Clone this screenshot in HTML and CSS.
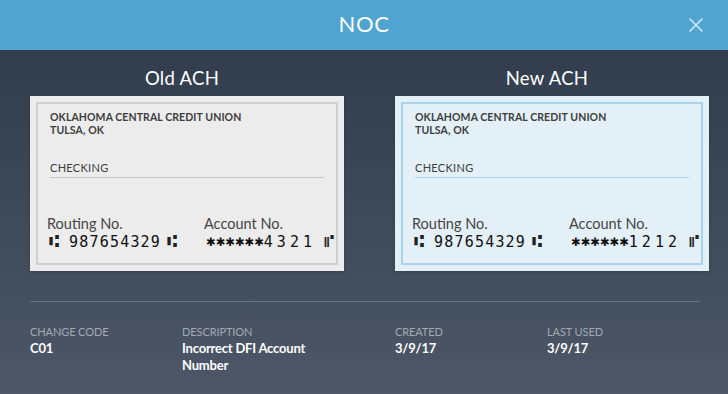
FILE: index.html
```html
<!DOCTYPE html>
<html lang="en">
<head>
  <meta charset="UTF-8" />
  <title>NOC</title>
  <link rel="stylesheet" href="styles.css">
</head>
<body>
  <header class="modal-header">
    <h1>NOC</h1>
    <button class="close" aria-label="Close">
      <svg width="16" height="16" viewBox="0 0 16 16"><path d="M1.5 1.5 L14.5 14.5 M14.5 1.5 L1.5 14.5" stroke="#cfe7f5" stroke-width="1.6" fill="none"/></svg>
    </button>
  </header>
  <main>
    <section class="compare">
      <div class="ach">
        <h2>Old ACH</h2>
        <div class="check">
          <div class="check-inner">
            <div class="bank">OKLAHOMA CENTRAL CREDIT UNION<br>TULSA, OK</div>
            <div class="acct-type">CHECKING</div>
            <div class="numbers">
              <div class="num routing">
                <span class="num-label">Routing No.</span>
                <span class="micr"><span class="sym">⑆</span>987654329<span class="sym after">⑆</span></span>
              </div>
              <div class="num">
                <span class="num-label">Account No.</span>
                <span class="micr"><span class="stars">✱✱✱✱✱✱</span><span class="acct-digits">4321</span><span class="sym onus">⑈</span></span>
              </div>
            </div>
          </div>
        </div>
      </div>
      <div class="ach new">
        <h2>New ACH</h2>
        <div class="check">
          <div class="check-inner">
            <div class="bank">OKLAHOMA CENTRAL CREDIT UNION<br>TULSA, OK</div>
            <div class="acct-type">CHECKING</div>
            <div class="numbers">
              <div class="num routing">
                <span class="num-label">Routing No.</span>
                <span class="micr"><span class="sym">⑆</span>987654329<span class="sym after">⑆</span></span>
              </div>
              <div class="num">
                <span class="num-label">Account No.</span>
                <span class="micr"><span class="stars">✱✱✱✱✱✱</span><span class="acct-digits">1212</span><span class="sym onus">⑈</span></span>
              </div>
            </div>
          </div>
        </div>
      </div>
    </section>
    <hr class="divider">
    <section class="meta">
      <div>
        <div class="meta-label">CHANGE CODE</div>
        <div class="meta-value">C01</div>
      </div>
      <div>
        <div class="meta-label">DESCRIPTION</div>
        <div class="meta-value">Incorrect DFI Account<br>Number</div>
      </div>
      <div>
        <div class="meta-label">CREATED</div>
        <div class="meta-value">3/9/17</div>
      </div>
      <div>
        <div class="meta-label">LAST USED</div>
        <div class="meta-value">3/9/17</div>
      </div>
    </section>
  </main>
</body>
</html>
```

FILE: styles.css
```css
html, body {
  margin: 0;
  height: 394px;
  overflow: hidden;
}
body {
  background: linear-gradient(#2e394a 0%, #3b4657 45%, #4d5767 100%);
  font-family: Lato, "Open Sans", Arial, sans-serif;
  color: #fff;
}
.modal-header {
  height: 50px;
  background: #50a4d0;
  display: flex;
  align-items: center;
  justify-content: center;
  position: relative;
}
.modal-header h1 {
  margin: 0;
  font-size: 22px;
  font-weight: 400;
  letter-spacing: 0.6px;
  margin-top: -4px;
}
.close {
  position: absolute;
  right: 24px;
  top: 17px;
  background: none;
  border: none;
  padding: 0;
  width: 16px;
  height: 16px;
}
.close svg {
  display: block;
}
.compare {
  display: flex;
  gap: 51px;
  padding-left: 30px;
}
.ach {
  width: 314px;
}
.ach h2 {
  margin: 0 0 0 -10px;
  padding-top: 18px;
  height: 28px;
  line-height: 20px;
  text-align: center;
  font-size: 18.5px;
  font-weight: 400;
  letter-spacing: 0.3px;
}
.check {
  background: #ececec;
  padding: 6px;
  height: 163px;
  box-shadow: 0 1px 3px rgba(0,0,0,0.2);
}
.check-inner {
  border: 2px solid #cfcfcf;
  padding: 7px 12px 0;
  box-sizing: border-box;
  height: 163px;
  color: #3d3d3d;
}
.new .check {
  background: #e4f0f8;
}
.new .check-inner {
  border-color: #a8d4e9;
}
.bank {
  font-size: 10.5px;
  font-weight: 700;
  line-height: 13px;
  letter-spacing: 0.1px;
}
.acct-type {
  margin-top: 25px;
  font-size: 11px;
  line-height: 12px;
  padding-bottom: 3px;
  border-bottom: 1px solid #c6c6c6;
  letter-spacing: 0.3px;
}
.new .acct-type {
  border-bottom-color: #a8d4e9;
}
.numbers {
  display: flex;
  margin-top: 38px;
  margin-left: -3px;
}
.num {
  display: flex;
  flex-direction: column;
  flex-shrink: 0;
}
.routing {
  width: 157px;
}
.num-label {
  font-size: 14.5px;
  line-height: 15px;
  color: #444;
}
.micr {
  font-family: "DejaVu Sans Mono", "Liberation Mono", monospace;
  font-size: 15px;
  line-height: 18px;
  margin-top: 2px;
  color: #111;
  letter-spacing: 1.2px;
  white-space: nowrap;
  margin-left: 2px;
}
.sym {
  font-size: 17px;
  line-height: 0;
  letter-spacing: 0;
  margin-right: 10px;
  color: #222;
}
.sym.after {
  margin-left: 6px;
  margin-right: 0;
}
.sym.onus {
  margin-left: 8px;
  margin-right: 0;
}
.stars {
  font-family: "DejaVu Sans", sans-serif;
  font-size: 11.5px;
  letter-spacing: 0;
  vertical-align: 1px;
}
.acct-digits {
  letter-spacing: 4px;
}
.divider {
  margin: 30px 28px 0 30px;
  border: none;
  border-top: 1px solid #667181;
}
.meta {
  display: grid;
  grid-template-columns: 152px 213px 152px auto;
  padding: 23px 0 0 30px;
}
.meta-label {
  font-size: 11px;
  line-height: 13px;
  color: #a2aab5;
  letter-spacing: -0.1px;
}
.meta-value {
  margin-top: 2px;
  font-size: 13px;
  line-height: 17px;
  font-weight: 700;
  letter-spacing: -0.2px;
}
```
